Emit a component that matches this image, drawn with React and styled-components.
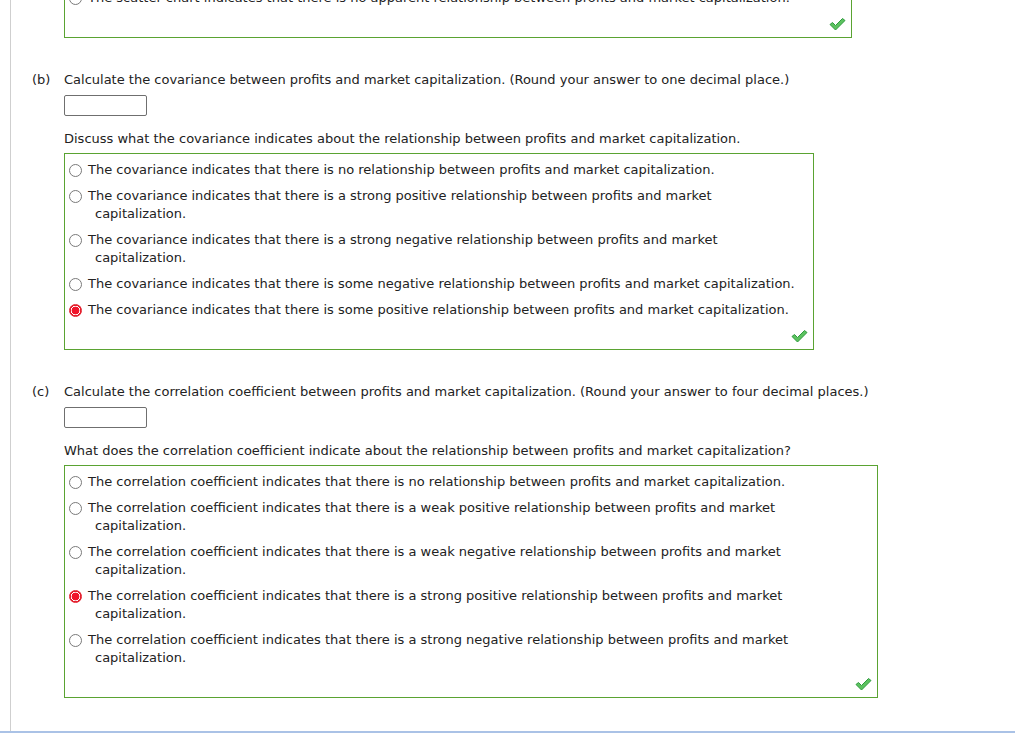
import React from 'react'
import styled, { createGlobalStyle } from 'styled-components'

const GlobalStyle = createGlobalStyle`
  html, body {
    margin: 0;
    padding: 0;
    background: #fff;
  }
  body {
    font-family: 'DejaVu Sans', Verdana, sans-serif;
    font-size: 13px;
    color: #222;
    overflow: hidden;
  }
`

const Viewport = styled.div`
  height: 731px;
  border-bottom: 2px solid #aac2e6;
  overflow: hidden;
`

const Page = styled.div`
  display: flow-root;
  margin-left: 10px;
  height: 100%;
  border-left: 1px solid #cfcfcf;
  padding-left: 21px;
`

const Part = styled.section`
  display: grid;
  grid-template-columns: 32px 1fr;
  margin-top: 33px;
`

const PartLabel = styled.div`
  line-height: 18px;
`

const PartBody = styled.div`
  display: flex;
  flex-direction: column;
  align-items: flex-start;
`

const Prompt = styled.p`
  margin: 0;
  line-height: 18px;
`

const AnswerInput = styled.input`
  box-sizing: border-box;
  width: 83px;
  height: 21px;
  margin: 6px 0 14px;
  border: 1px solid #6f6f6f;
  border-radius: 2px;
  background: #fff;
`

const ChoiceBox = styled.div`
  position: relative;
  box-sizing: border-box;
  width: ${(p) => p.$width}px;
  margin-top: ${(p) => p.$top ?? 5}px;
  border: 1px solid #5aa332;
  padding: 7px 4px 30px;
  display: flex;
  flex-direction: column;
  gap: 8px;
`

const Choice = styled.label`
  display: flex;
  align-items: flex-start;
  line-height: 18px;
`

const Radio = styled.span`
  flex: none;
  box-sizing: border-box;
  width: 13px;
  height: 13px;
  margin-top: 3px;
  border-radius: 50%;
  border: 1px solid ${(p) => (p.$checked ? '#e4202e' : '#7a7a7a')};
  background: ${(p) =>
    p.$checked
      ? 'radial-gradient(circle, #f0142a 0 3.6px, #fff 4.2px 4.6px, #e4202e 5px)'
      : '#fff'};
`

const ChoiceText = styled.span`
  margin-left: 6px;
  padding-left: 7px;
  text-indent: -7px;
`

const Check = styled.svg`
  position: absolute;
  right: 5px;
  bottom: 6px;
  width: 17px;
  height: 14px;
`

function CheckMark() {
  return (
    <Check viewBox='0 0 17 14'>
      <path
        d='M1 7.5 L3.5 5.5 L6.5 8.5 L13.5 1.5 L16 3.5 L6.5 13 Z'
        fill='#5cc25f'
        stroke='#2e9a3e'
        strokeWidth='1'
        strokeLinejoin='round'
      />
    </Check>
  )
}

function ChoiceList({ width, top, options, checked }) {
  return (
    <ChoiceBox $width={width} $top={top}>
      {options.map((lines, i) => (
        <Choice key={i}>
          <Radio $checked={i === checked} />
          <ChoiceText>
            {[].concat(lines).map((line, j) => (
              <React.Fragment key={j}>
                {j > 0 && <br />}
                {line}
              </React.Fragment>
            ))}
          </ChoiceText>
        </Choice>
      ))}
      <CheckMark />
    </ChoiceBox>
  )
}

const covOptions = [
  'The covariance indicates that there is no relationship between profits and market capitalization.',
  [
    'The covariance indicates that there is a strong positive relationship between profits and market',
    'capitalization.',
  ],
  [
    'The covariance indicates that there is a strong negative relationship between profits and market',
    'capitalization.',
  ],
  'The covariance indicates that there is some negative relationship between profits and market capitalization.',
  'The covariance indicates that there is some positive relationship between profits and market capitalization.',
]

const corrOptions = [
  'The correlation coefficient indicates that there is no relationship between profits and market capitalization.',
  [
    'The correlation coefficient indicates that there is a weak positive relationship between profits and market',
    'capitalization.',
  ],
  [
    'The correlation coefficient indicates that there is a weak negative relationship between profits and market',
    'capitalization.',
  ],
  [
    'The correlation coefficient indicates that there is a strong positive relationship between profits and market',
    'capitalization.',
  ],
  [
    'The correlation coefficient indicates that there is a strong negative relationship between profits and market',
    'capitalization.',
  ],
]

const TopPart = styled.div`
  padding-left: 32px;
  margin-top: -19px;
`

export default function App() {
  return (
    <>
      <GlobalStyle />
      <Viewport>
        <Page>
          <TopPart>
            <ChoiceList
              width={788}
              top={0}
              checked={-1}
              options={[
                'The scatter chart indicates that there is no apparent relationship between profits and market capitalization.',
              ]}
            />
          </TopPart>

          <Part>
            <PartLabel>(b)</PartLabel>
            <PartBody>
              <Prompt>
                Calculate the covariance between profits and market
                capitalization. (Round your answer to one decimal place.)
              </Prompt>
              <AnswerInput type='text' />
              <Prompt>
                Discuss what the covariance indicates about the relationship
                between profits and market capitalization.
              </Prompt>
              <ChoiceList width={750} checked={4} options={covOptions} />
            </PartBody>
          </Part>

          <Part>
            <PartLabel>(c)</PartLabel>
            <PartBody>
              <Prompt>
                Calculate the correlation coefficient between profits and
                market capitalization. (Round your answer to four decimal
                places.)
              </Prompt>
              <AnswerInput type='text' />
              <Prompt>
                What does the correlation coefficient indicate about the
                relationship between profits and market capitalization?
              </Prompt>
              <ChoiceList width={814} checked={3} options={corrOptions} />
            </PartBody>
          </Part>
        </Page>
      </Viewport>
    </>
  )
}
